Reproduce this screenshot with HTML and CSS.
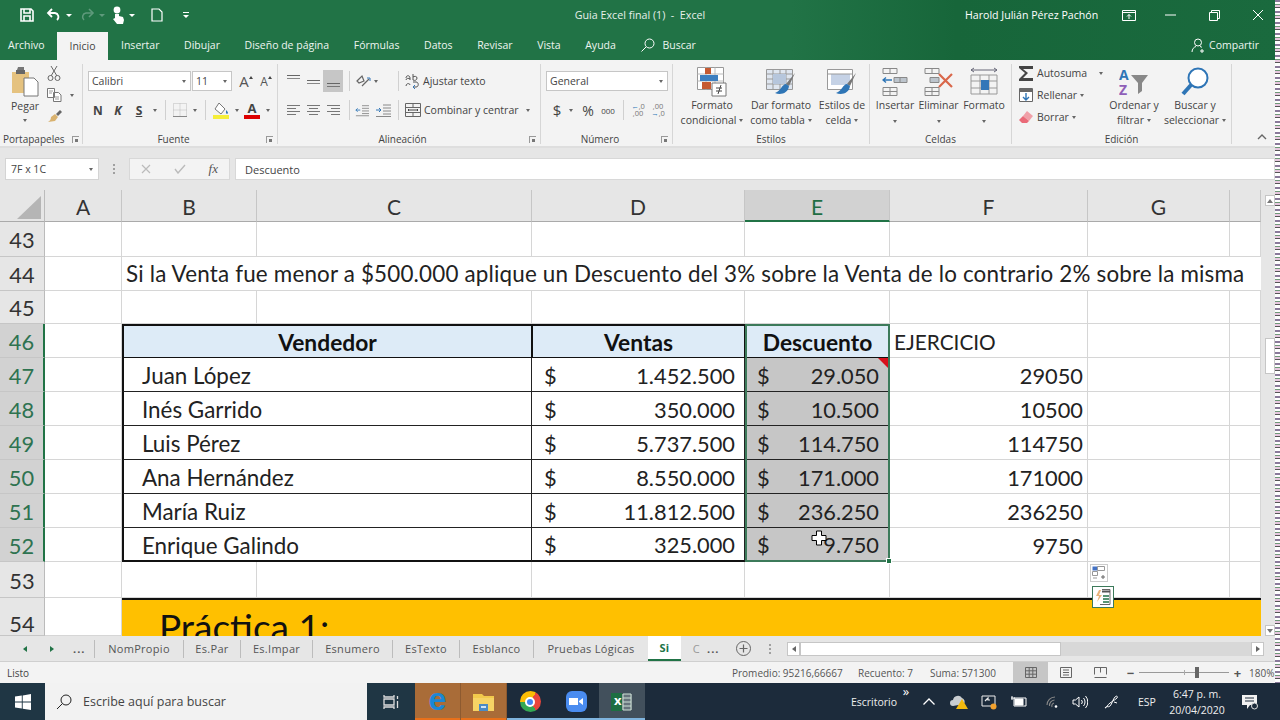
FILE: index.html
```html
<!DOCTYPE html>
<html lang="es">
<head>
<meta charset="utf-8">
<title>Guia Excel final (1) - Excel</title>
<link rel="stylesheet" href="styles.css">
</head>
<body>
<div class="upper">
<div class="window">
  <header class="head">
    <div class="titlebar">
      <div class="qat">
        <svg class="q1" width="16" height="16" viewBox="0 0 16 16" fill="none" stroke="#fff" stroke-width="1.6"><path d="M2 2h10l2 2v10H2z"/><path d="M5 2v4h6V2M5 14V9h6v5"/></svg>
        <svg class="q2" width="16" height="14" viewBox="0 0 16 14" fill="none" stroke="#fff" stroke-width="1.8"><path d="M6 1L2 5l4 4"/><path d="M2 5h7a4 4 0 0 1 2 7"/></svg>
        <i class="qc"></i>
        <svg class="q3" width="16" height="14" viewBox="0 0 16 14" fill="none" stroke="#5f9a7c" stroke-width="1.6"><path d="M10 1l4 4-4 4"/><path d="M14 5H7a4 4 0 0 0-2 7"/></svg>
        <i class="qc dim"></i>
        <svg class="q4" width="14" height="18" viewBox="0 0 14 18" fill="#fff"><circle cx="6" cy="4" r="3.4"/><path d="M4 8h4v2l4 1 1 3-1 4H6l-4-5 2-1z"/></svg>
        <i class="qc"></i>
        <svg class="q5" width="12" height="14" viewBox="0 0 12 14" fill="none" stroke="#fff" stroke-width="1.2"><path d="M1 1h7l3 3v9H1z"/></svg>
        <svg class="q6" width="8" height="8" viewBox="0 0 8 8" fill="#fff"><path d="M1 1h6v1H1zM1 4h6L4 7z"/></svg>
      </div>
      <div class="doc">Guia Excel final (1)&nbsp; -&nbsp; Excel</div>
      <div class="user">Harold Julián Pérez Pachón</div>
      <div class="winbtns">
        <svg width="14" height="11" viewBox="0 0 14 11" fill="none" stroke="#fff"><path d="M.5.5h13v10H.5zM.5 2.500h13M7 9V4.500M5 6.500l2-2 2 2"/></svg>
        <svg width="11" height="2" viewBox="0 0 11 2" stroke="#fff"><path d="M0 1h11"/></svg>
        <svg width="11" height="11" viewBox="0 0 11 11" fill="none" stroke="#fff"><path d="M.5 2.500h8v8h-8zM2.500 2.500v-2h8v8h-2"/></svg>
        <svg width="12" height="12" viewBox="0 0 12 12" stroke="#fff"><path d="M1 1l10 10M11 1L1 11"/></svg>
      </div>
    </div>
    <nav class="tabs">
      <span class="tab file">Archivo</span>
      <span class="tab on">Inicio</span>
      <span class="tab">Insertar</span>
      <span class="tab">Dibujar</span>
      <span class="tab">Diseño de página</span>
      <span class="tab">Fórmulas</span>
      <span class="tab">Datos</span>
      <span class="tab">Revisar</span>
      <span class="tab">Vista</span>
      <span class="tab">Ayuda</span>
      <span class="tab find"><svg width="14" height="14" viewBox="0 0 14 14" fill="none" stroke="#fff"><circle cx="8.500" cy="5.500" r="4.500"/><path d="M5 9l-4.500 4.500"/></svg>Buscar</span>
      <span class="tab share"><svg width="15" height="15" viewBox="0 0 15 15" fill="none" stroke="#fff"><circle cx="7" cy="4.500" r="3.500"/><path d="M1 14c0-3 2-5 4-5.500M9 8.500c1 .2 1.500.5 2 1M11 11v4M9 13h4"/></svg>Compartir</span>
    </nav>
  </header>

  <section class="ribbon">
    <div class="group g-clip">
      <div class="body">
        <div class="big paste">
          <svg width="28" height="30" viewBox="0 0 28 30"><path d="M1 5h17v21H1z" fill="#e5c27f"/><path d="M6 3h7V0H7z" fill="#777"/><path d="M5 3h9v4H5z" fill="#666"/><path d="M13 11h10l4 4v14H13z" fill="#fff" stroke="#777"/></svg>
          <span class="lbl pegar">Pegar</span><i class="caret"></i>
        </div>
        <div class="smalls">
          <svg width="14" height="15" viewBox="0 0 14 15" fill="none" stroke="#666"><circle cx="3.500" cy="12" r="2.500"/><circle cx="10.500" cy="12" r="2.500"/><path d="M4 10L10 0M10 10L4 0"/></svg>
          <span class="srow"><svg width="15" height="14" viewBox="0 0 15 14" fill="#fff" stroke="#777"><path d="M.5.5h7v9h-7zM6.500 4.500h5l2.500 2.500v6.500h-7.500z"/><path d="M2 3h4M2 5h3M8 9h4M8 11h4" stroke="#999"/></svg><i class="caret"></i></span>
          <svg width="16" height="14" viewBox="0 0 16 14"><path d="M9 5l4-4 2 2-4 4z" fill="#666"/><path d="M8 5l3 3-3 4-7 1c2-1 3-3 3-5z" fill="#d9b26f"/></svg>
        </div>
      </div>
      <div class="cap clipcap"><span>Portapapeles</span><span class="launch"></span></div>
    </div>

    <div class="group g-font">
      <div class="body col">
        <div class="row r1">
          <span class="box w103">Calibri<i class="caret"></i></span>
          <span class="box w40">11<i class="caret"></i></span>
          <span class="b w20 up">A<i class="tri"></i></span>
          <span class="b w16 down">A<i class="tri"></i></span>
        </div>
        <div class="row r2">
          <span class="b w20 fmt bold">N</span>
          <span class="b w20 fmt ital">K</span>
          <span class="b w22 fmt under">S</span>
          <span class="b w10"><i class="caret"></i></span>
          <span class="b w10"><i class="sep"></i></span>
          <span class="b w20"><svg width="14" height="14" viewBox="0 0 14 14" fill="none" stroke="#bbb" stroke-dasharray="1 1"><path d="M.5.500h13v13H.5zM.5 7h13M7 .5v13"/><path d="M0 13.500h14" stroke="#888" stroke-dasharray="none"/></svg></span>
          <span class="b w10"><i class="caret"></i></span>
          <span class="b w10"><i class="sep"></i></span>
          <span class="b w22"><svg width="16" height="17" viewBox="0 0 16 17"><path d="M6 1l6 6-4 5-6-5z" fill="#fff" stroke="#777"/><path d="M13 8c1 1 2 2 2 3 0 1-2 1-2 0z" fill="#3477b8"/><path d="M0 13h16v4H0z" fill="#f5ee3a"/></svg></span>
          <span class="b w10"><i class="caret"></i></span>
          <span class="b w20 color">A</span>
          <span class="b w12"><i class="caret"></i></span>
        </div>
      </div>
      <div class="cap"><span class="blank"></span><span>Fuente</span><span class="launch"></span></div>
    </div>

    <div class="group g-align">
      <div class="body col">
        <div class="row r1 pad5">
          <span class="b w20"><i class="al top"></i></span>
          <span class="b w20"><i class="al mid"></i></span>
          <span class="b w20 sel"><i class="al bot"></i></span>
          <span class="b w12"><i class="sep tall"></i></span>
          <span class="b w16"><svg width="15" height="14" viewBox="0 0 15 14" fill="none" stroke="#666"><path d="M1 7l5-5 2 5-5 2zM6 12l7-7" stroke-width="1.200"/><path d="M11 4h3v3" stroke="#3477b8"/></svg></span>
          <span class="b w10"><i class="caret"></i></span>
          <span class="b w12"></span>
          <span class="b w10"><i class="sep tall"></i></span>
          <span class="b w18"><svg width="14" height="16" viewBox="0 0 14 16" fill="none" stroke="#555"><path d="M1 5c0-3 4-3 4 0v2M5 6c-1-1-4-1-4 1M8 1v6c2 1 4 0 4-2s-3-2-4-1M1 13c0-3 4-3 4-1M8 9h3c3 0 3 5 0 5H8"/><path d="M10 12l-2 2 2 2" stroke="#3477b8"/></svg></span>
          <span class="txt">Ajustar texto</span>
        </div>
        <div class="row r2 pad5">
          <span class="b w20"><i class="al left"></i></span>
          <span class="b w20"><i class="al ctr"></i></span>
          <span class="b w20"><i class="al right"></i></span>
          <span class="b w12"><i class="sep"></i></span>
          <span class="b w14"><svg width="16" height="13" viewBox="0 0 16 13" fill="none" stroke="#888"><path d="M8 1h8M8 4h8M8 7h8M8 10h8M1 12.500h15"/><path d="M6 6H1M3 4L1 6l2 2" stroke="#2e75b6"/></svg></span>
          <span class="b w28"><svg width="16" height="13" viewBox="0 0 16 13" fill="none" stroke="#888"><path d="M8 1h8M8 4h8M8 7h8M8 10h8M1 12.500h15"/><path d="M1 6h5M4 4l2 2-2 2" stroke="#2e75b6"/></svg></span>
          <span class="b w2"><i class="sep"></i></span>
          <span class="b w5"></span>
          <span class="b w18"><svg width="16" height="14" viewBox="0 0 16 14" fill="none" stroke="#666"><path d="M.5.500h15v13H.5zM.5 4.500h15M.5 9.500h15M8 .5v4M8 9.500v4"/><path d="M3 7h10M4 6L3 7l1 1M12 6l1 1-1 1" stroke="#444"/></svg></span>
          <span class="txt">Combinar y centrar</span><i class="caret ml"></i>
        </div>
      </div>
      <div class="cap"><span class="blank"></span><span>Alineación</span><span class="launch"></span></div>
    </div>

    <div class="group g-num">
      <div class="body col">
        <div class="row r1 pad5"><span class="box w122">General<i class="caret"></i></span></div>
        <div class="row r2 pad7">
          <span class="b w18 dollar">$</span>
          <span class="b w10"><i class="caret"></i></span>
          <span class="b w2"></span>
          <span class="b w20 pct">%</span>
          <span class="b w20 mil">000</span>
          <span class="b w10"><i class="sep"></i></span>
          <span class="b w20 dec"><i class="blue">←</i>,0<br>,00</span>
          <span class="b w20 dec">,00<br><i class="blue">→</i>,0</span>
        </div>
      </div>
      <div class="cap"><span class="blank"></span><span>Número</span><span class="launch"></span></div>
    </div>

    <div class="group g-styles">
      <div class="body">
        <div class="big w68">
          <svg class="ic" width="30" height="30" viewBox="0 0 30 30"><path d="M.5.500h26v22H.5z" fill="#fff" stroke="#999"/><path d="M.5 7h26M.5 14h26M9 .5v22M18 .5v22" stroke="#bbb" fill="none"/><path d="M8 1h6v6H8z" fill="#c55a32"/><path d="M3 8h18v6H3z" fill="#3d7fc0"/><path d="M5 15h9v7H5z" fill="#c55a32"/><path d="M15 16h14v13H15z" fill="#fff" stroke="#777"/><path d="M19 21h6M19 24h6M24 18l-3 9" stroke="#444" fill="none"/></svg>
          <span class="lbl">Formato</span><span class="lbl">condicional<i class="caret ml2"></i></span>
        </div>
        <div class="big w70">
          <svg class="ic" width="30" height="30" viewBox="0 0 30 30"><path d="M.5 2.500h26v20H.5z" fill="#dfe6f0" stroke="#999"/><path d="M.5 7h26M.5 12h26M.5 17h26M7 2.500v20M14 2.500v20M20 2.500v20" stroke="#999" fill="none"/><path d="M7 7h13v10H7z" fill="#b6c6dc"/><path d="M29 6L20 17l3 2z" fill="#777"/><path d="M20 17c-4 0-5 7-11 9 5 2 13 1 14-7z" fill="#2e75b6"/></svg>
          <span class="lbl">Dar formato</span><span class="lbl">como tabla<i class="caret ml2"></i></span>
        </div>
        <div class="big w52">
          <svg class="ic" width="30" height="30" viewBox="0 0 30 30"><path d="M.5 2.500h25v20H.5z" fill="#fff" stroke="#999"/><path d="M4 7h19v11H4z" fill="#c5d2e6"/><path d="M.5 7h25" stroke="#999"/><path d="M29 6L20 17l3 2z" fill="#777"/><path d="M20 17c-4 0-5 7-11 9 5 2 13 1 14-7z" fill="#2e75b6"/></svg>
          <span class="lbl">Estilos de</span><span class="lbl">celda<i class="caret ml2"></i></span>
        </div>
      </div>
      <div class="cap plain"><span>Estilos</span></div>
    </div>

    <div class="group g-cells">
      <div class="body">
        <div class="big w44">
          <svg class="ic" width="26" height="28" viewBox="0 0 26 28" fill="none" stroke="#888"><path d="M1 .5h14v5H1zM8 .5v5M1 19.500h14v8H1zM1 23.500h14M8 19.500v8"/><path d="M12 9.500h13v5H12z" fill="#bcc4cc"/><path d="M18 9.500v5" /><path d="M1 12h9M4 9.500L1 12l3 2.500" stroke="#2e75b6" stroke-width="1.400"/></svg>
          <span class="lbl">Insertar</span><i class="caret"></i>
        </div>
        <div class="big w43">
          <svg class="ic" width="30" height="28" viewBox="0 0 30 28" fill="none" stroke="#888"><path d="M1 .5h14v5H1zM8 .5v5M1 19.500h14v8H1zM1 23.500h14M8 19.500v8"/><path d="M6 9.500h9v5H6z" fill="#bcc4cc"/><path d="M15 6l13 13M28 6L15 19" stroke="#d9674a" stroke-width="2.200"/></svg>
          <span class="lbl">Eliminar</span><i class="caret"></i>
        </div>
        <div class="big w48">
          <svg class="ic" width="28" height="30" viewBox="0 0 28 30" fill="none" stroke="#999"><path d="M1 3h7M4 1L1 3l3 2M27 3h-7M24 1l3 2-3 2M8 3h12" stroke="#667"/><path d="M1 8h26v19H1zM10 8v19M19 8v19M1 14h26M1 21h26" /><path d="M11 13h8v10h-8z" fill="#3477b8" stroke="none"/></svg>
          <span class="lbl">Formato</span><i class="caret"></i>
        </div>
      </div>
      <div class="cap plain"><span>Celdas</span></div>
    </div>

    <div class="group g-edit">
      <div class="body">
        <div class="col w88">
          <div class="erow e1"><span class="b w18"><svg width="15" height="15" viewBox="0 0 15 15" fill="#444"><path d="M0 0h14v3H4l5 4-5 5h10v3H0v-2l6-6-6-5z"/></svg></span><span class="txt">Autosuma</span><i class="caret ml10"></i></div>
          <div class="erow"><span class="b w18"><svg width="14" height="14" viewBox="0 0 14 14" fill="#fff" stroke="#666"><path d="M.5.500h13v13H.5z"/><path d="M.5 2.500h13" stroke="#666" stroke-width="3"/><path d="M7 5v7M4 9l3 3 3-3" stroke="#2e75b6" fill="none" stroke-width="1.400"/></svg></span><span class="txt">Rellenar</span><i class="caret ml3"></i></div>
          <div class="erow"><span class="b w18"><svg width="14" height="12" viewBox="0 0 14 12"><path d="M8 0l6 5-4 5-6-5z" fill="#f0a0a8"/><path d="M4 5l6 5-2 2H3L0 9z" fill="#ea6a78"/></svg></span><span class="txt">Borrar</span><i class="caret ml3"></i></div>
        </div>
        <div class="big w58">
          <svg class="ic" width="30" height="30" viewBox="0 0 30 30"><text class="az a" x="0" y="13">A</text><text class="az z" x="0" y="28">Z</text><path d="M12 8h17l-6 8v8l-4 3V16z" fill="#888"/></svg>
          <span class="lbl">Ordenar y</span><span class="lbl">filtrar<i class="caret ml2"></i></span>
        </div>
        <div class="big w64">
          <svg class="ic" width="28" height="30" viewBox="0 0 28 30" fill="none"><circle cx="17" cy="11" r="9.500" stroke="#2e75b6" stroke-width="2" fill="#fff"/><path d="M10 18L2 27" stroke="#2e75b6" stroke-width="4"/></svg>
          <span class="lbl">Buscar y</span><span class="lbl">seleccionar<i class="caret ml2"></i></span>
        </div>
      </div>
      <div class="cap plain"><span>Edición</span></div>
    </div>
    <div class="collapse"><svg width="10" height="6" viewBox="0 0 10 6" fill="none" stroke="#666" stroke-width="1.400"><path d="M1 5l4-4 4 4"/></svg></div>
  </section>

  <section class="fbar">
    <div class="namebox">7F x 1C<i class="caret"></i></div>
    <div class="fdots"><i></i><i></i><i></i></div>
    <div class="fbtns">
      <svg width="10" height="10" viewBox="0 0 10 10" stroke="#bbb" stroke-width="1.200"><path d="M1 1l8 8M9 1L1 9"/></svg>
      <svg width="12" height="10" viewBox="0 0 12 10" stroke="#bbb" stroke-width="1.400" fill="none"><path d="M1 5l3 4 7-8"/></svg>
      <span class="fx">fx</span>
    </div>
    <div class="finput">Descuento</div>
  </section>

  <section class="sheetwrap">
    <div class="sheet">
      <div class="corner"><svg width="24" height="23" viewBox="0 0 24 23"><path d="M24 0v23H0z" fill="#b5b5b5"/></svg></div>
      <div class="ch">A</div><div class="ch">B</div><div class="ch">C</div><div class="ch">D</div><div class="ch hot">E</div><div class="ch">F</div><div class="ch">G</div><div class="ch"></div>

      <div class="rh">43</div><div class="c"></div><div class="c"></div><div class="c"></div><div class="c"></div><div class="c"></div><div class="c"></div><div class="c"></div><div class="c"></div>

      <div class="rh">44</div><div class="c"></div><div class="c note">Si la Venta fue menor a $500.000 aplique un Descuento del 3% sobre la Venta de lo contrario 2% sobre la misma</div>

      <div class="rh">45</div><div class="c"></div><div class="c"></div><div class="c"></div><div class="c"></div><div class="c"></div><div class="c"></div><div class="c"></div><div class="c"></div>

      <div class="rh hot">46</div><div class="c"></div><div class="c th vend">Vendedor</div><div class="c th">Ventas</div><div class="c th">Descuento</div><div class="c ej">EJERCICIO</div><div class="c"></div><div class="c"></div>

      <div class="rh hot">47</div><div class="c"></div><div class="c name">Juan López</div><div class="c money"><span>$</span><span>1.452.500</span></div><div class="c money shade flag"><span>$</span><span>29.050</span></div><div class="c num">29050</div><div class="c"></div><div class="c"></div>
      <div class="rh hot">48</div><div class="c"></div><div class="c name">Inés Garrido</div><div class="c money"><span>$</span><span>350.000</span></div><div class="c money shade"><span>$</span><span>10.500</span></div><div class="c num">10500</div><div class="c"></div><div class="c"></div>
      <div class="rh hot">49</div><div class="c"></div><div class="c name">Luis Pérez</div><div class="c money"><span>$</span><span>5.737.500</span></div><div class="c money shade"><span>$</span><span>114.750</span></div><div class="c num">114750</div><div class="c"></div><div class="c"></div>
      <div class="rh hot">50</div><div class="c"></div><div class="c name">Ana Hernández</div><div class="c money"><span>$</span><span>8.550.000</span></div><div class="c money shade"><span>$</span><span>171.000</span></div><div class="c num">171000</div><div class="c"></div><div class="c"></div>
      <div class="rh hot">51</div><div class="c"></div><div class="c name">María Ruiz</div><div class="c money"><span>$</span><span>11.812.500</span></div><div class="c money shade"><span>$</span><span>236.250</span></div><div class="c num">236250</div><div class="c"></div><div class="c"></div>
      <div class="rh hot">52</div><div class="c"></div><div class="c name last">Enrique Galindo</div><div class="c money last"><span>$</span><span>325.000</span></div><div class="c money shade last"><span>$</span><span>9.750</span><svg class="cursor" width="16" height="16" viewBox="0 0 16 16"><path d="M5.500 1h5v4.500H15v5h-4.500V15h-5v-4.500H1v-5h4.500z" fill="#fff" stroke="#000"/></svg></div><div class="c num">9750</div><div class="c"></div><div class="c"></div>

      <div class="rh">53</div><div class="c"></div><div class="c"></div><div class="c"></div><div class="c"></div><div class="c"></div><div class="c"></div><div class="c"></div><div class="c"></div>

      <div class="rh r54">54</div><div class="c"></div><div class="practice">Práctica 1:</div>

      <div class="selection"><i class="handle"></i></div>
      <div class="float opt"><svg width="14" height="14" viewBox="0 0 14 14" fill="none" stroke="#999"><path d="M.5.500h5v4h-5z" fill="#4472c4" stroke="none"/><path d="M5.500.500h7v4h-7zM.5 5.500h5v4h-5zM1 12h4" /><path d="M11 9v4M9 11h4" stroke="#666"/></svg></div>
      <div class="float quick"><svg width="16" height="16" viewBox="0 0 16 16" fill="none"><path d="M7 .500h8v15H5" stroke="#666" fill="#fff"/><path d="M7 1.500h8v2H7z" fill="#555"/><path d="M8 7h6M8 10h6M8 13h6" stroke="#217346" stroke-width="1.400"/><path d="M4 1L1 7h3l-2 6 5-7H4l2-5z" fill="#e8b37a"/></svg></div>
    </div>
    <div class="vscroll">
      <span class="sbtn"><i class="tri-up"></i></span>
      <span class="vtrack"><span class="vthumb"></span></span>
      <span class="sbtn"><i class="tri-dn"></i></span>
    </div>
  </section>

  <section class="sheettabs">
    <span class="nav w14"><i class="navl"></i></span>
    <span class="nav w40"><i class="navr"></i></span>
    <span class="more">...</span>
    <span class="st t-nom">NomPropio</span>
    <span class="st t-par">Es.Par</span>
    <span class="st t-imp">Es.Impar</span>
    <span class="st t-esn">Esnumero</span>
    <span class="st t-tex">EsTexto</span>
    <span class="st t-bla">Esblanco</span>
    <span class="st t-pru">Pruebas Lógicas</span>
    <span class="st act">Si</span>
    <span class="st cut">C</span>
    <span class="more m2">...</span>
    <span class="plus"><svg width="15" height="15" viewBox="0 0 15 15" fill="none" stroke="#666"><circle cx="7.500" cy="7.500" r="7"/><path d="M7.500 3.500v8M3.500 7.500h8" stroke-width="1.200"/></svg></span>
    <span class="vdots"><i></i><i></i><i></i></span>
    <span class="hs">
      <span class="hbtn"><i class="navl gray"></i></span>
      <span class="hthumb"></span>
      <span class="htrack"></span>
      <span class="hbtn"><i class="navr gray"></i></span>
    </span>
  </section>

  <footer class="status">
    <span class="ready">Listo</span>
    <span class="stat s1">Promedio: 95216,66667</span>
    <span class="stat s2">Recuento: 7</span>
    <span class="stat s3">Suma: 571300</span>
    <span class="view cur"><svg width="12" height="11" viewBox="0 0 12 11" fill="none" stroke="#666"><path d="M.5.500h11v10H.5zM.5 3.800h11M.5 7.200h11M4.200.5v10M7.800.5v10"/></svg></span>
    <span class="view"><svg width="12" height="11" viewBox="0 0 12 11" fill="none" stroke="#666"><path d="M.5.500h11v10H.5zM3 3h6M3 5.500h6M3 8h6"/></svg></span>
    <span class="view"><svg width="13" height="11" viewBox="0 0 13 11" fill="none" stroke="#666"><path d="M.5 7.500V.5h12v7M6.500.5v5"/><path d="M.5 10.500h12"/></svg></span>
    <span class="zoomctl"><i class="zm">−</i><span class="slider"><i class="mid-tick"></i><i class="thumb"></i></span><i class="zm">+</i></span>
    <span class="pctz">180%</span>
  </footer>
</div>
<div class="noise"></div>
</div>

<div class="taskbar">
  <span class="start"><svg width="16" height="16" viewBox="0 0 16 16" fill="#fff"><path d="M0 2.500L6.800 1.500v6H0zM7.700 1.400L16 0v7.500H7.700zM0 8.400h6.800v6L0 13.500zM7.700 8.400H16V16l-8.300-1.300z"/></svg></span>
  <span class="search"><svg width="16" height="16" viewBox="0 0 16 16" fill="none" stroke="#222"><circle cx="10" cy="6" r="5"/><path d="M6.500 9.500L1 15"/></svg><span>Escribe aquí para buscar</span></span>
  <span class="tb w48"><svg width="16" height="14" viewBox="0 0 16 14" fill="none" stroke="#ddd" stroke-width="1.300"><path d="M1 0v2h10V0M1 14v-2h10v2M1 4h10v6H1zM14.500 1v3M14.500 6v7"/></svg></span>
  <span class="tb warm"><span class="edge">e</span></span>
  <span class="tb warm"><svg width="21" height="18" viewBox="0 0 21 18"><path d="M0 1h9l2 2h10v3H0z" fill="#f2c94c"/><path d="M0 5h21v13H0z" fill="#f6d365"/><path d="M6 11h9v7H6z" fill="#4a8ac4"/><path d="M8 13h5v2H8z" fill="#cfe3f3"/></svg></span>
  <span class="tb open"><span class="chrome"><i></i></span></span>
  <span class="tb open"><span class="zoomapp"><svg width="14" height="9" viewBox="0 0 14 9" fill="#fff"><path d="M0 1h9v7H0zM10 4l4-3v7l-4-3z"/></svg></span></span>
  <span class="tb open act"><svg width="22" height="20" viewBox="0 0 22 20"><path d="M10 2h11v16H10z" fill="#fff" opacity=".2"/><path d="M12 2h8v16h-8zM12 6h8M12 10h8M12 14h8" stroke="#cfe3d6" fill="none"/><path d="M0 1h11v18H0z" fill="#1e6e42"/></svg><span class="xl">x</span></span>
  <span class="tray">
    <span class="tr w52 tx">Escritorio</span>
    <span class="tr w12 chev">»</span>
    <span class="tr w34"><svg width="12" height="7" viewBox="0 0 12 7" fill="none" stroke="#fff" stroke-width="1.300"><path d="M.5 6.500L6 1l5.500 5.500"/></svg></span>
    <span class="tr w26"><svg width="18" height="14" viewBox="0 0 18 14"><path d="M3 11a3 3 0 0 1 0-6 5 5 0 0 1 9-2 4 4 0 0 1 2 6z" fill="#c9cdd1"/><path d="M12 4l6 10H6z" fill="#f2b90f"/></svg></span>
    <span class="tr w34"><svg width="16" height="16" viewBox="0 0 16 16" fill="none" stroke="#eee"><path d="M1 2h13v10H1z"/><path d="M4 7l3-3v2h2" stroke-width="1.200"/><circle cx="12.500" cy="12.500" r="3" fill="#f2a12e" stroke="none"/></svg></span>
    <span class="tr w26"><svg width="16" height="11" viewBox="0 0 16 11" fill="none" stroke="#fff"><path d="M3 2h12v8H3z"/><path d="M4 3h8v6H4z" fill="#fff"/><path d="M0 2h4M1 0v4" stroke-width="1"/></svg></span>
    <span class="tr w40"><svg width="13" height="12" viewBox="0 0 13 12" fill="none" stroke="#888" stroke-width="1.100"><path d="M1 9a8 8 0 0 1 8-8M3.500 10a5.500 5.500 0 0 1 5-6M6 11a3 3 0 0 1 2-4"/><circle cx="10" cy="10.500" r="1.300" fill="#fff" stroke="none"/></svg></span>
    <span class="tr w16"><svg width="16" height="14" viewBox="0 0 16 14" fill="none" stroke="#fff"><path d="M1 5h2.500L7 2v10L3.500 9H1zM9.500 5a3 3 0 0 1 0 4M11.500 3a6 6 0 0 1 0 8M13.500 1a9 9 0 0 1 0 12"/></svg></span>
    <span class="tr w48"><svg width="16" height="16" viewBox="0 0 16 16" fill="none" stroke="#fff"><path d="M1 14c2-3 3 0 5-2s3-7 5-9 3 0 2 1-4 3-7 5-3 5-5 5M10 8l3 1"/></svg></span>
    <span class="tr w22 tx">ESP</span>
    <span class="tr w78 clock"><span>6:47 p. m.</span><span>20/04/2020</span></span>
    <span class="tr w28"><svg width="16" height="16" viewBox="0 0 16 16"><path d="M0 1h15v10H8l-3 4v-4H0z" fill="#f2f2f2"/><path d="M3 4h9M3 7h9" stroke="#1c2b3b"/><circle cx="12.500" cy="12" r="3" fill="#1c2b3b" stroke="#ddd"/></svg></span>
    <span class="tr w16"></span>
  </span>
</div>
</body>
</html>
```
FILE: styles.css
```css
*{box-sizing:border-box}
html,body{margin:0;padding:0}
body{width:1280px;height:720px;overflow:hidden;font-family:"Open Sans","Noto Sans",sans-serif;font-size:10.5px;color:#444;background:#1c2b3b}
i{font-style:normal}
.upper{display:flex;height:683px}
.window{width:1275px;display:flex;flex-direction:column;flex:none}
.noise{width:5px;background:#fff repeating-linear-gradient(180deg,#8a7a9a 0 2px,#fff 2px 4px,#6f9a78 4px 5px,#e8c8e0 5px 7px,#555 7px 8px,#fff 8px 11px)}

/* title */
.head{background:linear-gradient(90deg,#217346 0,#217346 62%,#17663a 75%,#1a6a3e 100%);color:#fff}
.titlebar{height:30px;display:flex;align-items:center;position:relative}
.qat{display:flex;align-items:center;padding-left:19px;width:250px}
.q2{margin-left:11px}.qc{width:0;height:0;border:3px solid transparent;border-top-color:#fff;border-bottom:0;margin-left:4px}
.qc.dim{border-top-color:#5f9a7c}
.q3{margin-left:7px}.q4{margin-left:6px}.q5{margin-left:16px}.q6{margin-left:19px}
.doc{width:780px;text-align:center;font-size:10.7px;color:#e6f0ea}
.user{width:134px;margin-left:-65px;font-size:10.6px;white-space:nowrap}
.winbtns{display:flex;align-items:center;gap:0;margin-left:23px}
.winbtns svg:nth-child(1){margin-right:29px}
.winbtns svg:nth-child(2){margin-right:33px}
.winbtns svg:nth-child(3){margin-right:32px}
.tabs{height:30px;display:flex;align-items:stretch;padding-left:8px}
.tab{display:flex;align-items:center;margin-right:24.6px;white-space:nowrap;color:#eef5f0;font-size:10.5px}
.tab.file{margin-right:10px;width:39px}
.tab.on{background:#f3f3f3;color:#444;margin:2px 13px 0 0;padding:0 11px;width:51px;justify-content:center}
.tab.find{margin-left:1px;gap:7px;margin-right:0}
.tab.share{margin-left:auto;margin-right:16px;gap:3px}

/* ribbon */
.ribbon{height:88px;background:#f3f3f3;display:flex;padding-top:4px;box-shadow:inset 0 -2px 0 #dedede;flex:none}
.group{height:80px;border-right:1px solid #d6d6d6;display:flex;flex-direction:column;flex:none}
.body{height:65px;display:flex;flex:none}
.col{display:flex;flex-direction:column}
.cap{height:14px;margin-top:3px;display:grid;grid-template-columns:1fr auto 1fr;align-items:center;font-size:10px;color:#444;white-space:nowrap;padding-right:13px;flex:none}
.cap.plain{display:flex;justify-content:center;padding-right:0}
.cap.clipcap{display:flex;justify-content:space-between;padding:0 0 0 3px}
.launch{justify-self:end;width:7px;height:7px;border:1px solid #999;border-width:1px 0 0 1px;margin-right:-9px}
.clipcap .launch{margin-right:3px}
.launch::after{content:"";width:3px;height:3px;background:#777;display:block;margin:2px 0 0 2px}
.g-clip{width:83px}
.g-clip .body{padding-left:5px}
.g-font{width:195px}
.g-font .body{padding-left:5px}
.g-align{width:263px}
.g-num{width:132px}
.g-styles{width:197px}
.g-styles .body{padding-left:5px}
.g-cells{width:142px}
.g-cells .body{padding-left:3px}
.g-edit{width:220px}
.g-edit .body{padding-left:5px}
.collapse{flex:1;display:flex;justify-content:flex-end;align-items:flex-end;padding:0 8px 8px 0}
.paste{width:40px}
.big{display:flex;flex-direction:column;align-items:center;flex:none;padding-top:3px;color:#444;white-space:nowrap}
.big>svg{height:30px;flex:none;margin-bottom:1px}
.lbl{height:15px;line-height:15px;font-size:10.5px;display:block}
.big>.caret{margin-top:7px}
.paste .lbl{margin-top:1px}
.paste .caret{margin-top:5px}
.smalls{display:flex;flex-direction:column;align-items:flex-start;width:30px;padding:2px 0 0 2px;gap:7px}
.srow{display:flex;align-items:center;gap:8px}
.row{display:flex;align-items:center;height:22px;flex:none}
.r1{margin-top:6px}.r2{margin-top:7px}
.pad5{padding-left:5px}.pad7{padding-left:7px}
.b{display:flex;align-items:center;justify-content:center;flex:none;height:22px}
.w2{width:2px}.w5{width:5px}.w10{width:10px}.w12{width:12px}.w14{width:14px}.w16{width:16px}.w18{width:18px}.w20{width:20px}.w22{width:22px}.w26{width:26px}.w28{width:28px}.w34{width:34px}.w40{width:40px}.w43{width:43px}.w44{width:44px}.w48{width:48px}.w52{width:52px}.w58{width:58px}.w64{width:64px}.w68{width:68px}.w70{width:70px}.w78{width:78px}.w88{width:88px}.w103{width:103px}.w122{width:122px}
.box{height:20px;background:#fff;border:1px solid #c6c6c6;display:flex;align-items:center;justify-content:space-between;padding:0 4px 0 3px;margin-right:1px;font-size:10.5px;flex:none}
.caret{display:inline-block;width:0;height:0;border:2.500px solid transparent;border-top:3px solid #666;border-bottom:0;flex:none}
.ml{margin-left:7px}.ml2{margin-left:3px;vertical-align:2px}.ml3{margin-left:3px}.ml10{margin-left:12px}
.sep{display:block;width:1px;height:20px;background:#d0d0d0}
.up{font-size:15px;color:#555;align-items:center;margin-left:3px}
.down{font-size:12px;color:#555;margin-left:2px}
.tri{width:0;height:0;border:2px solid transparent;border-bottom:3px solid #444;border-top:0;margin:-8px 0 0 0}
.fmt{font-size:12px;color:#444}
.bold{font-weight:700}.ital{font-weight:700;font-style:italic}
.under{font-weight:700;text-decoration:underline}
.color{font-size:13px;font-weight:700;color:#444;border-bottom:4px solid #d00;height:18px;width:16px;margin:0 2px;line-height:12px}
.sel{background:#c6c6c6}
.al{display:block;width:13px;height:13px;background-repeat:no-repeat}
.al.top{background:linear-gradient(#666,#666) 0 0/13px 1px no-repeat,linear-gradient(#888,#888) 0 3px/13px 1px no-repeat}
.al.mid{background:linear-gradient(#666,#666) 0 5px/13px 1px no-repeat,linear-gradient(#888,#888) 0 8px/13px 1px no-repeat}
.al.bot{background:linear-gradient(#666,#666) 0 8px/13px 1px no-repeat,linear-gradient(#777,#777) 0 11px/13px 1px no-repeat}
.al.left{background:linear-gradient(#777,#777) 0 1px/13px 1px no-repeat,linear-gradient(#777,#777) 0 4px/9px 1px no-repeat,linear-gradient(#777,#777) 0 7px/13px 1px no-repeat,linear-gradient(#777,#777) 0 10px/9px 1px no-repeat}
.al.ctr{background:linear-gradient(#777,#777) 0 1px/13px 1px no-repeat,linear-gradient(#777,#777) 2px 4px/9px 1px no-repeat,linear-gradient(#777,#777) 0 7px/13px 1px no-repeat,linear-gradient(#777,#777) 2px 10px/9px 1px no-repeat}
.al.right{background:linear-gradient(#777,#777) 0 1px/13px 1px no-repeat,linear-gradient(#777,#777) 4px 4px/9px 1px no-repeat,linear-gradient(#777,#777) 0 7px/13px 1px no-repeat,linear-gradient(#777,#777) 4px 10px/9px 1px no-repeat}
.txt{font-size:10.5px;white-space:nowrap;padding-left:2px;color:#444}
.dollar{font-size:15px}.pct{font-size:14px}.mil{font-size:8px}
.dec{display:block;font-size:7.500px;line-height:7px;height:auto;text-align:center;color:#777}
.blue{color:#2e75b6}
.erow{display:flex;align-items:center;height:22px;flex:none}
.e1{margin-top:-2px}
.az{font:700 14px "Open Sans",sans-serif}.az.a{fill:#2e75b6}.az.z{fill:#8f5fb8}

/* formula */
.fbar{height:42px;background:#e6e6e6;display:flex;align-items:center;padding:0 0 0 5px;flex:none}
.namebox{width:94px;height:22px;background:#fff;border:1px solid #d4d4d4;display:flex;align-items:center;justify-content:space-between;padding:0 5px;font-size:10.5px}
.fdots{width:30px;display:flex;flex-direction:column;align-items:center;gap:2px}
.fdots i,.vdots i{width:2px;height:2px;background:#a0a0a0;display:block}
.fbtns{width:101px;height:22px;background:#f3f3f3;border:1px solid #d8d8d8;display:flex;align-items:center;justify-content:space-between;padding:0 11px}
.fx{font:italic 400 13px "Liberation Serif",serif;color:#555}
.finput{margin-left:5px;flex:1;height:22px;background:#fff;border:1px solid #d8d8d8;display:flex;align-items:center;padding-left:9px;font-size:11px}

/* sheet */
.sheetwrap{height:446px;display:flex;flex:none;background:#e6e6e6}
.sheet{width:1261px;height:446px;overflow:hidden;display:grid;grid-template-columns:45px 77px 135px 275px 213px 145px 198px 142px 31px;grid-template-rows:32px 35px 34px 33px 34px repeat(6,34px) 36px 38px;position:relative;background:#fff;font-family:Lato,"Open Sans",sans-serif;font-size:21.8px;color:#222;flex:none}
.corner{background:#e6e6e6;display:flex;padding:6px 0 0 17px;border-right:1px solid #bbb;border-bottom:1px solid #aaa}
.ch{background:#e6e6e6;display:flex;align-items:center;justify-content:center;border-right:1px solid #c6c6c6;border-bottom:1px solid #aaa;font-size:21px;color:#333;padding-top:2px}
.ch.hot{background:#d2d2d2;color:#1f6e43;border-bottom:2px solid #217346}
.rh{background:#e6e6e6;display:flex;align-items:center;justify-content:center;border-right:1px solid #bbb;border-bottom:1px solid #c6c6c6;color:#333;padding-top:1px}
.rh.hot{background:#d2d2d2;color:#2e7350;border-right:2px solid #217346;padding-top:2px}
.r54{align-items:flex-end;line-height:1;padding-bottom:0}
.c{border-right:1px solid #d6d6d6;border-bottom:1px solid #d6d6d6;display:flex;align-items:center;min-width:0;white-space:nowrap;position:relative}
.note{grid-column:3 / 10;padding-left:4px;font-size:22.4px;letter-spacing:.18px;border-right:0}
.th{background:#ddebf7;font-weight:700;font-size:22.8px;justify-content:center;color:#111;border:1px solid #111;border-top:2px solid #111}
.vend{grid-column:span 2;border-left:2px solid #111}
.name{grid-column:span 2;padding:2px 0 0 18px;font-size:22.4px;border-left:2px solid #111;border-bottom:1px solid #222;border-right:1px solid #222}
.money{justify-content:space-between;padding:1px 9px 0 12px;border-right:1px solid #222;border-bottom:1px solid #222}
.last{border-bottom:2px solid #111}
.shade{background:#c6c6c6;border-right-width:2px;border-right-color:#222}
.flag::after{content:"";position:absolute;right:0;top:0;border:5px solid transparent;border-top-color:#d8101c;border-right-color:#d8101c}
.ej{padding:2px 0 0 4px;font-size:20.8px}
.num{justify-content:flex-end;padding:1px 4px 0 0}
.practice{grid-column:3 / 10;background:#ffc000;border-top:2px solid #111;font-size:37px;padding-left:37px;color:#111;line-height:54px;white-space:nowrap}
.selection{position:absolute;inset:0;grid-column:6 / 7;grid-row:5 / 12;border:2px solid #3c7a5a;pointer-events:none;z-index:2}
.handle{position:absolute;right:-4px;bottom:-4px;background:#217346;border:1px solid #fff;box-sizing:content-box;width:4px;height:4px}
.cursor{position:absolute;left:66px;top:2px;z-index:3}
.float{position:absolute;display:flex;align-items:center;justify-content:center;background:#fff;z-index:3}
.opt{left:1090px;top:374px;width:18px;height:18px;border:1px solid #ccc}
.quick{left:1092px;top:396px;width:22px;height:22px;border:1px solid #3c7a5a}
.vscroll{flex:1;display:flex;flex-direction:column;padding:5px 0 0 4px}
.sbtn{height:11px;background:#fff;border:1px solid #c6c6c6;display:flex;align-items:center;justify-content:center;flex:none}
.tri-up{border:3.500px solid transparent;border-bottom:4px solid #777;border-top:0}
.tri-dn{border:3.500px solid transparent;border-top:4px solid #777;border-bottom:0}
.vtrack{flex:1;padding-top:132px}
.vthumb{display:block;height:36px;background:#fff;border:1px solid #c6c6c6}

/* sheet tabs */
.sheettabs{height:26px;background:#e6e6e6;border-bottom:1px solid #cfcfcf;display:flex;align-items:center;padding-left:23px;font-size:11px;letter-spacing:.3px;color:#555;flex:none}
.nav{display:flex;align-items:center;height:100%}
.w14.nav{width:27px}.w40.nav{width:23px}
.navl{border:3.500px solid transparent;border-right:4px solid #217346;border-left:0}
.navr{border:3.500px solid transparent;border-left:4px solid #217346;border-right:0}
.navl.gray{border-right-color:#666}.navr.gray{border-left-color:#666}
.more{width:21px;font-weight:700;letter-spacing:1px;color:#555}
.st{height:18px;display:flex;align-items:center;justify-content:center;border-left:1px solid #bcbcbc;white-space:nowrap;flex:none}
.t-nom{width:89px}.t-par{width:57px}.t-imp{width:72px}.t-esn{width:80px}.t-tex{width:67px}.t-bla{width:74px}.t-pru{width:115px}
.st.act{width:33px;height:25px;background:#fff;border:0;border-bottom:2px solid #217346;font-weight:700;color:#217346;margin-top:-1px}
.st.cut{width:26px;border:0;color:#999;justify-content:flex-end;padding-right:7px}
.m2{width:18px;margin-left:0}
.plus{width:28px;margin-left:4px;display:flex;justify-content:center}
.vdots{width:26px;display:flex;flex-direction:column;align-items:center;gap:2px}
.hs{margin-left:4px;width:477px;height:14px;display:flex;align-items:stretch;flex:none}
.hbtn{width:13px;background:#fff;border:1px solid #c6c6c6;display:flex;align-items:center;justify-content:center;flex:none}
.hthumb{width:261px;background:#fff;border:1px solid #c6c6c6;flex:none}
.htrack{flex:1;background:#d8d8d8}

/* status */
.status{height:21px;background:#f3f3f3;display:flex;align-items:center;padding-left:7px;font-size:10px;color:#555;flex:none;white-space:nowrap}
.ready{width:725px;color:#444}
.s1{width:126px}.s2{width:72px}.s3{width:83px}
.view{width:35px;height:100%;display:flex;align-items:center;justify-content:center;flex:none}
.cur{background:#c6c6c6}
.zoomctl{display:flex;align-items:center;margin-left:8px;gap:4px}
.zm{font-size:13px;font-weight:700;color:#555;width:9px;text-align:center}
.slider{width:90px;height:1px;background:#999;display:block;position:relative}
.mid-tick{position:absolute;left:45px;top:-2px;width:1px;height:5px;background:#aaa}
.thumb{position:absolute;left:56px;top:-5px;width:4px;height:11px;background:#666}
.pctz{margin-left:7px}

/* taskbar */
.taskbar{height:37px;background:#1c2b3b;display:flex;align-items:stretch;color:#fff}
.start{width:45px;background:#1f3644;display:flex;align-items:center;justify-content:center;flex:none}
.search{width:322px;background:#f2f2f2;color:#444;display:flex;align-items:center;padding-left:11px;gap:11px;font-size:12.500px;flex:none}
.tb{width:46px;display:flex;align-items:center;justify-content:center;flex:none;position:relative}
.tb.w48{width:48px;background:#1f3644}
.warm{background:#a96c38;border-right:1px solid #8d5a30;box-shadow:inset 0 -2px 0 #e8701a}
.open{box-shadow:inset 0 -2px 0 #7fb4de}
.open.act{background:#42505c}
.edge{font:700 32px/30px "Liberation Sans",sans-serif;color:#1b87d6;margin-top:-6px}
.chrome{width:21px;height:21px;border-radius:50%;background:conic-gradient(from 30deg,#e8453c 0 120deg,#34a853 120deg 240deg,#fbbc05 240deg 360deg);display:flex;align-items:center;justify-content:center}
.chrome i{width:10px;height:10px;border-radius:50%;background:#4285f4;border:2px solid #fff}
.zoomapp{width:21px;height:21px;border-radius:6px;background:#4a8cf0;display:flex;align-items:center;justify-content:center}
.xl{position:absolute;left:15px;top:8px;font:700 13px/18px "Open Sans",sans-serif;color:#fff}
.tray{margin-left:auto;display:flex;align-items:center;flex:none}
.tr{display:flex;align-items:center;justify-content:center;flex:none;height:100%}
.tx{font-size:10.500px;color:#eee}
.chev{font-size:13px;align-items:flex-start;line-height:12px;padding-top:2px}
.clock{flex-direction:column;font-size:10.500px;line-height:16px;color:#eee}
```
